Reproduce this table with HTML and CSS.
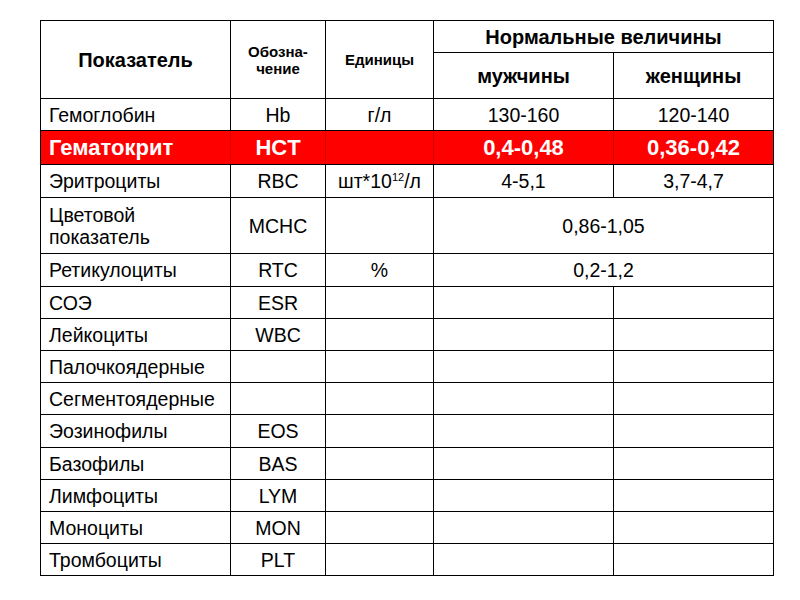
FILE: index.html
```html
<!DOCTYPE html>
<html lang="ru">
<head>
<meta charset="utf-8">
<link rel="stylesheet" href="styles.css">
</head>
<body>
<table class="tbl">
  <colgroup>
    <col class="c1"><col class="c2"><col class="c3"><col class="c4"><col class="c5">
  </colgroup>
  <tr class="h1">
    <th rowspan="2" class="big">Показатель</th>
    <th rowspan="2" class="small">Обозна-<br>чение</th>
    <th rowspan="2" class="small">Единицы</th>
    <th colspan="2" class="big">Нормальные величины</th>
  </tr>
  <tr class="h2">
    <th class="big">мужчины</th>
    <th class="big">женщины</th>
  </tr>
  <tr><td class="name">Гемоглобин</td><td>Hb</td><td>г/л</td><td>130-160</td><td>120-140</td></tr>
  <tr class="red"><td class="name">Гематокрит</td><td>HCT</td><td></td><td>0,4-0,48</td><td>0,36-0,42</td></tr>
  <tr class="r33"><td class="name">Эритроциты</td><td>RBC</td><td>шт*10<sup>12</sup>/л</td><td>4-5,1</td><td>3,7-4,7</td></tr>
  <tr class="tall"><td class="name">Цветовой<br>показатель</td><td>MCHC</td><td></td><td colspan="2">0,86-1,05</td></tr>
  <tr class="r33"><td class="name">Ретикулоциты</td><td>RTC</td><td>%</td><td colspan="2">0,2-1,2</td></tr>
  <tr><td class="name">СОЭ</td><td>ESR</td><td></td><td></td><td></td></tr>
  <tr><td class="name">Лейкоциты</td><td>WBC</td><td></td><td></td><td></td></tr>
  <tr><td class="name">Палочкоядерные</td><td></td><td></td><td></td><td></td></tr>
  <tr><td class="name">Сегментоядерные</td><td></td><td></td><td></td><td></td></tr>
  <tr class="r33"><td class="name">Эозинофилы</td><td>EOS</td><td></td><td></td><td></td></tr>
  <tr><td class="name">Базофилы</td><td>BAS</td><td></td><td></td><td></td></tr>
  <tr><td class="name">Лимфоциты</td><td>LYM</td><td></td><td></td><td></td></tr>
  <tr><td class="name">Моноциты</td><td>MON</td><td></td><td></td><td></td></tr>
  <tr><td class="name">Тромбоциты</td><td>PLT</td><td></td><td></td><td></td></tr>
</table>
</body>
</html>
```
FILE: styles.css
```css
html, body {
  margin: 0;
  padding: 0;
  background: #fff;
}
body {
  font-family: "Liberation Sans", Arial, sans-serif;
  color: #000;
}
.tbl {
  border-collapse: collapse;
  table-layout: fixed;
  width: 733px;
  margin: 20px 0 0 40px;
}
.c1 { width: 190px; }
.c2 { width: 95px; }
.c3 { width: 108px; }
.c4 { width: 180px; }
.c5 { width: 160px; }
.tbl th, .tbl td {
  border: 1px solid #000;
  padding: 0;
  text-align: center;
  vertical-align: middle;
  font-size: 19.5px;
  line-height: 22px;
  height: 32px;
  box-sizing: border-box;
}
.tbl th {
  font-weight: bold;
}
.tbl th.big {
  font-size: 20px;
}
.tbl th.small {
  font-size: 15px;
  line-height: 17px;
}
.h1 th { height: 32px; }
.h2 th { height: 46px; }
.tbl td.name {
  text-align: left;
  padding-left: 8px;
}
.r33 td { height: 33px; }
.tall td { height: 56px; }
.red td {
  background: #f00;
  color: #fff;
  font-weight: bold;
  font-size: 22px;
  height: 34px;
  border-left-color: #d00000;
  border-right-color: #d00000;
}
.red td:first-child { border-left-color: #000; }
.red td:last-child { border-right-color: #000; }
sup {
  font-size: 11px;
  line-height: 0;
  vertical-align: 7px;
}
```
